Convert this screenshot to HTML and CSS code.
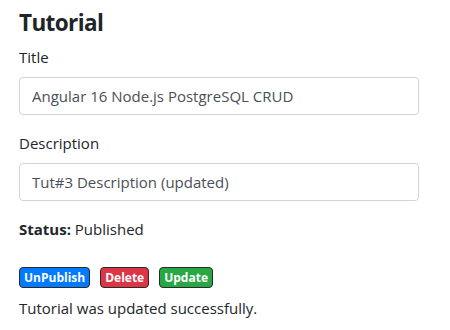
FILE: index.html
```
<!DOCTYPE html>
<html>
<head>
<meta charset="utf-8">
<link rel="stylesheet" href="styles.css">
</head>
<body>
<div class="edit-form">
  <h4 class="heading">Tutorial</h4>
  <form>
    <div class="form-group">
      <label class="label" for="title">Title</label>
      <input class="form-control" id="title" type="text" value="Angular 16 Node.js PostgreSQL CRUD">
    </div>
    <div class="form-group">
      <label class="label" for="description">Description</label>
      <input class="form-control" id="description" type="text" value="Tut#3 Description (updated)">
    </div>
    <div class="status"><strong>Status:</strong> Published</div>
  </form>
  <div class="actions">
    <button class="badge badge-primary" type="button">UnPublish</button>
    <button class="badge badge-danger" type="button">Delete</button>
    <button class="badge badge-success" type="button">Update</button>
  </div>
  <p class="message">Tutorial was updated successfully.</p>
</div>
</body>
</html>
```
FILE: styles.css
```
html, body {
  margin: 0;
  padding: 0;
  background: #fff;
}
body {
  font-family: "Open Sans", "Noto Sans", "Liberation Sans", sans-serif;
  font-size: 15px;
  line-height: 24px;
  color: #212529;
  padding-top: 8px;
}
.edit-form {
  width: 400px;
  margin-left: 19px;
}
.heading {
  margin: 0 0 8px 0;
  font-size: 22.5px;
  font-weight: 700;
  line-height: 29px;
  letter-spacing: -0.6px;
}
form {
  margin: 0;
}
.form-group {
  margin-bottom: 16px;
}
.label {
  display: block;
  margin-bottom: 8px;
}
.form-control {
  display: block;
  box-sizing: border-box;
  width: 100%;
  height: 38px;
  padding: 6px 12px;
  font-family: inherit;
  font-size: 15px;
  line-height: 24px;
  color: #495057;
  background: #fff;
  border: 1px solid #ced4da;
  border-radius: 4px;
  outline: none;
}
.status {
  height: 24px;
}
.actions {
  display: flex;
  gap: 10px;
  margin-top: 26px;
}
.badge {
  font-family: inherit;
  font-size: 12px;
  font-weight: 700;
  line-height: 1;
  padding: 3px 4px;
  height: 21px;
  color: #fff;
  border: 1px solid #2a2a2a;
  border-radius: 4px;
  cursor: pointer;
}
.badge-primary { background: #007bff; }
.badge-danger { background: #dc3545; }
.badge-success { background: #28a745; }
.message {
  margin: 8px 0 0 0;
}
```
